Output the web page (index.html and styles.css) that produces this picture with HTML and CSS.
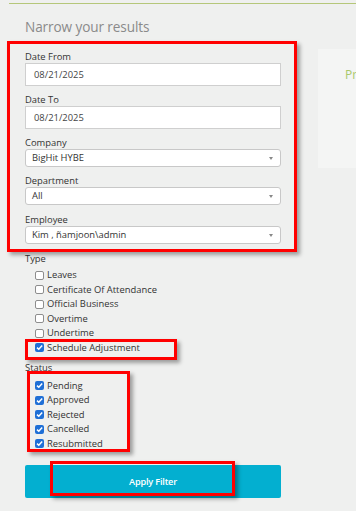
FILE: index.html
```html
<!DOCTYPE html>
<html>
<head>
<meta charset="utf-8">
<link rel="stylesheet" href="styles.css">
</head>
<body>
<div class="topline"></div>
<div class="layout">
  <div class="filters">
    <h2 class="heading">Narrow your results</h2>
    <div class="field">
      <div class="label">Date From</div>
      <div class="input">08/21/2025</div>
    </div>
    <div class="field">
      <div class="label">Date To</div>
      <div class="input">08/21/2025</div>
    </div>
    <div class="field">
      <div class="label">Company</div>
      <div class="select"><span>BigHit HYBE</span><span class="caret"></span></div>
    </div>
    <div class="field">
      <div class="label">Department</div>
      <div class="select"><span>All</span><span class="caret"></span></div>
    </div>
    <div class="field">
      <div class="label">Employee</div>
      <div class="select"><span>Kim , ñamjoon\admin</span><span class="caret"></span></div>
    </div>

    <div class="group-label type-label">Type</div>
    <ul class="checks">
      <li><span class="cb"></span>Leaves</li>
      <li><span class="cb"></span>Certificate Of Attendance</li>
      <li><span class="cb"></span>Official Business</li>
      <li><span class="cb"></span>Overtime</li>
      <li><span class="cb"></span>Undertime</li>
      <li><span class="cb on"><svg viewBox="0 0 9 9" width="9" height="9"><path d="M2 4.6 L3.8 6.3 L7.2 2.6" fill="none" stroke="#fff" stroke-width="1.5"/></svg></span>Schedule Adjustment</li>
    </ul>

    <div class="group-label status-label">Status</div>
    <ul class="checks status">
      <li><span class="cb on"><svg viewBox="0 0 9 9" width="9" height="9"><path d="M2 4.6 L3.8 6.3 L7.2 2.6" fill="none" stroke="#fff" stroke-width="1.5"/></svg></span>Pending</li>
      <li><span class="cb on"><svg viewBox="0 0 9 9" width="9" height="9"><path d="M2 4.6 L3.8 6.3 L7.2 2.6" fill="none" stroke="#fff" stroke-width="1.5"/></svg></span>Approved</li>
      <li><span class="cb on"><svg viewBox="0 0 9 9" width="9" height="9"><path d="M2 4.6 L3.8 6.3 L7.2 2.6" fill="none" stroke="#fff" stroke-width="1.5"/></svg></span>Rejected</li>
      <li><span class="cb on"><svg viewBox="0 0 9 9" width="9" height="9"><path d="M2 4.6 L3.8 6.3 L7.2 2.6" fill="none" stroke="#fff" stroke-width="1.5"/></svg></span>Cancelled</li>
      <li><span class="cb on"><svg viewBox="0 0 9 9" width="9" height="9"><path d="M2 4.6 L3.8 6.3 L7.2 2.6" fill="none" stroke="#fff" stroke-width="1.5"/></svg></span>Resubmitted</li>
    </ul>

    <button class="apply">Apply Filter</button>
  </div>
  <div class="side">
    <div class="side-text">Pr</div>
  </div>
</div>

<div class="mark mark-fields"></div>
<div class="mark mark-schedule"></div>
<div class="mark mark-status"></div>
<div class="mark mark-apply"></div>
</body>
</html>
```
FILE: styles.css
```css
html, body {
  margin: 0;
  padding: 0;
}
body {
  width: 356px;
  height: 511px;
  overflow: hidden;
  background: #eff0ef;
  font-family: "Open Sans", "Noto Sans", sans-serif;
  color: #333;
  position: relative;
}
.topline {
  margin: 3px 0 0 9px;
  height: 1px;
  background: #b5c77a;
}
.layout {
  display: flex;
  align-items: flex-start;
}
.filters {
  width: 256px;
  padding: 0 37px 0 25px;
  flex: none;
}
.heading {
  margin: 13px 0 0 0;
  font-size: 13.6px;
  line-height: 20px;
  font-weight: normal;
  color: #8a8a8a;
  letter-spacing: -0.1px;
}
.field {
  margin-top: 7px;
}
.heading + .field {
  margin-top: 13px;
}
.label, .group-label {
  font-size: 9.4px;
  line-height: 13px;
  color: #333;
}
.input {
  box-sizing: border-box;
  height: 23px;
  background: #fff;
  border: 1px solid #cfcfcf;
  font-size: 9.4px;
  line-height: 21px;
  padding-left: 8px;
  color: #444;
}
.select {
  box-sizing: border-box;
  height: 18px;
  background: #fff;
  border: 1px solid #c8c8c8;
  border-radius: 3px;
  font-size: 9.4px;
  line-height: 16px;
  padding: 0 6px 0 6px;
  color: #333;
  display: flex;
  justify-content: space-between;
  align-items: center;
}
.caret {
  width: 0;
  height: 0;
  border-left: 2.5px solid transparent;
  border-right: 2.5px solid transparent;
  border-top: 3px solid #888;
  margin-right: 1px;
}
.field:nth-child(6) {
  margin-top: 8px;
}
.type-label {
  margin-top: 8px;
}
.checks {
  list-style: none;
  margin: 3px 0 0 0;
  padding: 0 0 0 10px;
}
.checks li {
  font-size: 9.4px;
  line-height: 14.5px;
  height: 14.5px;
  display: flex;
  align-items: center;
  color: #333;
}
.cb {
  box-sizing: border-box;
  width: 9px;
  height: 9px;
  border: 1px solid #8d8d8d;
  border-radius: 2px;
  background: #fff;
  margin-right: 3px;
  flex: none;
  display: flex;
}
.cb.on {
  border: none;
  background: #1f6fd6;
}
.cb svg {
  display: block;
}
.status-label {
  margin-top: 6px;
}
.checks.status {
  margin-top: 4.5px;
}
.apply {
  display: block;
  width: 256px;
  height: 33px;
  margin-top: 14px;
  border: none;
  border-radius: 2px;
  background: #03afd0;
  color: #fff;
  font-family: "Open Sans", "Noto Sans", sans-serif;
  font-size: 9.2px;
  font-weight: 600;
  letter-spacing: -0.2px;
  padding: 0;
}
.side {
  flex: 1;
  margin-top: 45px;
  height: 119px;
  background: #f4f5f4;
}
.side-text {
  margin: 19px 0 0 27px;
  font-size: 12px;
  line-height: 14px;
  color: #a9c86a;
}
.mark {
  position: absolute;
  border: 3px solid #ff0000;
  box-sizing: border-box;
  box-shadow: 3px 3px 4px rgba(0, 0, 0, 0.35);
}
.mark-fields {
  left: 7px;
  top: 41px;
  width: 290px;
  height: 211px;
}
.mark-schedule {
  left: 25px;
  top: 339px;
  width: 152px;
  height: 21px;
}
.mark-status {
  left: 27px;
  top: 371px;
  width: 103px;
  height: 81px;
}
.mark-apply {
  left: 50px;
  top: 461px;
  width: 185px;
  height: 35px;
}
```
